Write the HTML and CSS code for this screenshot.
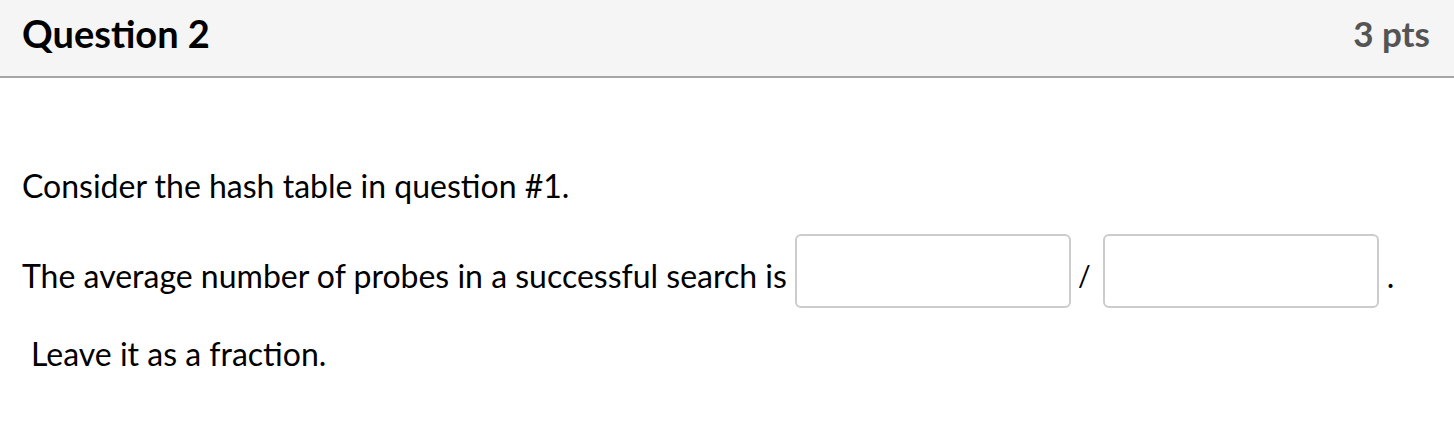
FILE: index.html
```html
<!DOCTYPE html>
<html>
<head>
<meta charset="utf-8">
<link rel="stylesheet" href="styles.css">
</head>
<body>
<div class="question">
  <div class="header">
    <h2 class="title">Question 2</h2>
    <div class="points">3 pts</div>
  </div>
  <div class="content">
    <p class="para">Consider the hash table in question #1.</p>
    <div class="answer-row">
      <span class="lead">The average number of probes in a successful search is</span>
      <input class="blank" type="text">
      <span class="slash">/</span>
      <input class="blank" type="text">
      <span class="dot">.</span>
    </div>
    <p class="para indent">Leave it as a fraction.</p>
  </div>
</div>
</body>
</html>
```
FILE: styles.css
```css
* { box-sizing: border-box; }
body {
  margin: 0;
  background: #fff;
  font-family: Lato, "Open Sans", sans-serif;
  color: #000;
}
.header {
  display: flex;
  justify-content: space-between;
  align-items: center;
  height: 78px;
  padding: 0 24px 10px 22px;
  background: #f5f5f5;
  border-bottom: 2px solid #a5a5a5;
}
.title {
  margin: 0;
  font-size: 38px;
  font-weight: 700;
  color: #000;
}
.points {
  font-size: 35px;
  font-weight: 700;
  color: #545454;
}
.content {
  padding: 90px 22px 0 22px;
  font-size: 32px;
}
.para {
  margin: 0;
  line-height: 36px;
}
.answer-row {
  display: flex;
  align-items: center;
  margin-top: 30px;
  height: 74px;
  line-height: 36px;
}
.lead {
  padding-top: 10px;
}
.blank {
  width: 276px;
  height: 74px;
  margin: 0 0 0 8px;
  border: 2px solid #cccccc;
  border-radius: 6px;
  background: #fff;
  font: inherit;
}
.slash {
  width: 21px;
  margin-left: 3px;
  text-align: center;
  padding-top: 8px;
  font-size: 28px;
}
.dot {
  margin-left: 8px;
  padding-top: 10px;
}
.indent {
  margin-top: 28px;
  padding-left: 9px;
}
```
